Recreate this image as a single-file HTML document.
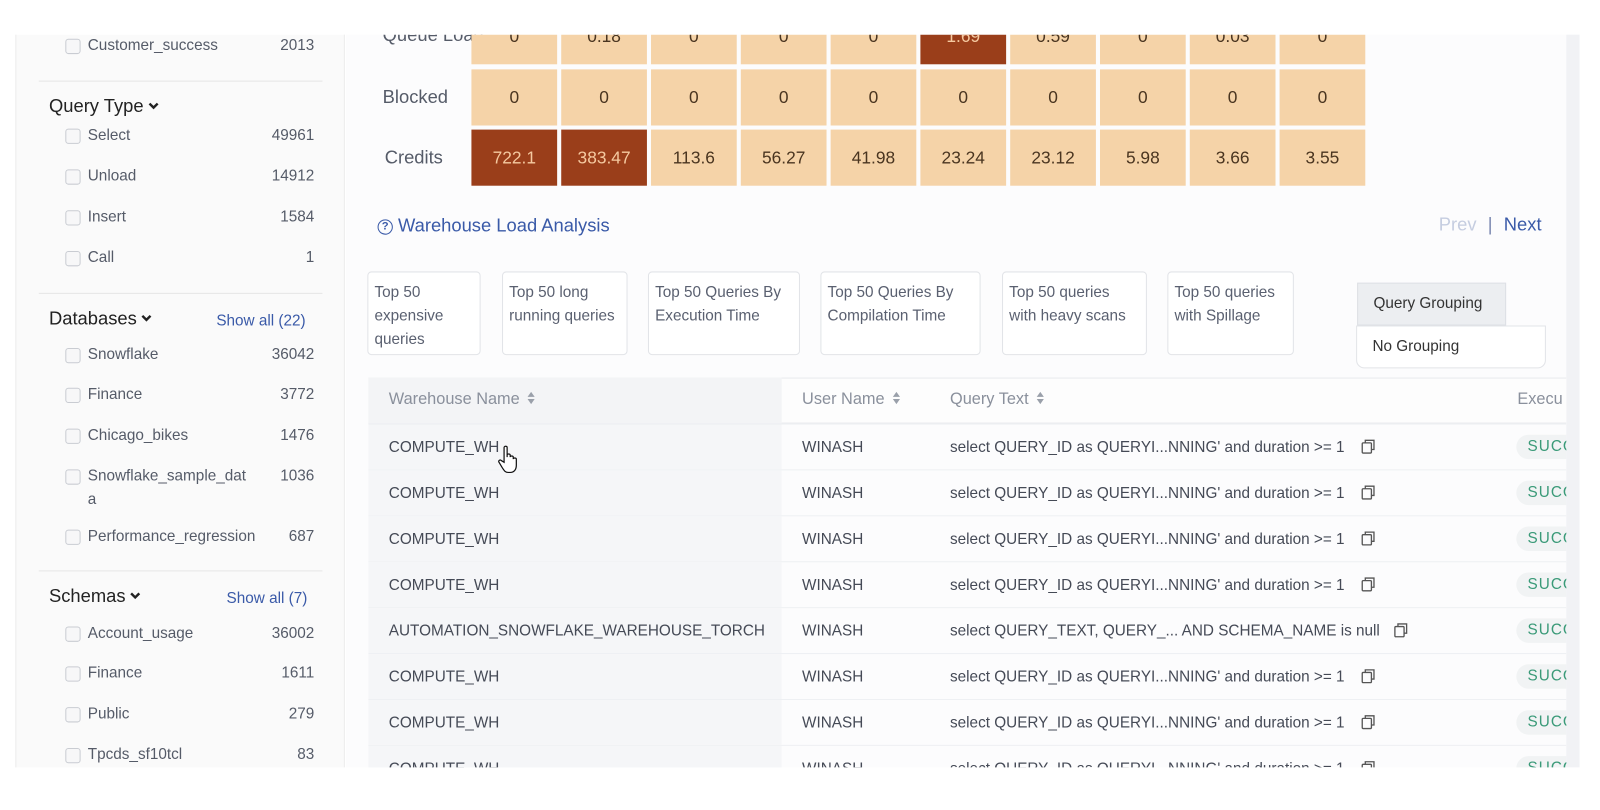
<!DOCTYPE html>
<html><head><meta charset="utf-8"><style>
*{margin:0;padding:0;box-sizing:border-box}
html,body{width:1600px;height:810px;overflow:hidden;background:#fff}
#wrap{position:absolute;left:0;top:0;width:1568px;height:794px;transform:scale(1.0204);transform-origin:0 0;font-family:"Liberation Sans",sans-serif;color:#4a5060}
.a{position:absolute;white-space:nowrap}
#side{position:absolute;left:15px;top:34px;width:323px;height:718px;background:#fafafa;border-left:1px solid #ececec;border-right:1px solid #ececec;overflow:hidden}
#main{position:absolute;left:339px;top:34px;width:1196px;height:718px;background:#fcfcfd;overflow:hidden}
#strip{position:absolute;left:1535px;top:34px;width:13px;height:718px;background:#f1f2f5}
.cb{position:absolute;width:15px;height:15px;border:1px solid #c9ccd2;border-radius:3px;background:#f7f7f8}
.it{font-size:15px;color:#555b68}
.num{font-size:15px;color:#555b68;text-align:right;width:80px}
.hd{font-size:18px;color:#222}
.lnk{font-size:15px;color:#3a5aa8}
.sep{position:absolute;left:22px;width:278px;height:1px;background:#e6e6e6}
.cell{position:absolute;width:84px;height:55px;background:#f5d3a8;text-align:center;line-height:55px;font-size:17px;color:#4a3520}
.dk{background:#9a3e1a;color:#f5c9a0}
.rl{font-size:18px;color:#555b68}
.card{position:absolute;top:266px;height:82px;border:1px solid #e2e4e8;border-radius:4px;background:#fff;padding:8px 6px;font-size:15px;line-height:23px;color:#5a6070;white-space:normal}
.row{position:absolute;left:361px;width:1174px;height:45px;border-bottom:1px solid #eef0f3}
.row .w{position:absolute;left:0;top:0;width:405px;height:44px;background:#f5f6f8}
.t{position:absolute;font-size:15px;color:#454a56;top:14px;white-space:nowrap}
.suc{position:absolute;left:1125px;top:10px;width:60px;height:24px;border-radius:12px;background:#f1f3f4;color:#3a9a78;font-size:15px;line-height:24px;padding-left:11px;letter-spacing:1px}
.cp{position:absolute;top:14px;width:14px;height:15px}
.th{position:absolute;top:13px;font-size:16px;color:#8a909c;white-space:nowrap}
.chev{display:inline-block;vertical-align:2px;margin-left:4px}
.srt{display:inline-block;vertical-align:-1px;margin-left:7px}
</style></head><body><div id="wrap">
<div id="side">
 <div class="cb" style="left:48px;top:4px"></div><div class="a it" style="left:70px;top:2px">Customer_success</div><div class="a num" style="left:212px;top:2px">2013</div>
 <div class="sep" style="top:45px"></div>
 <div class="a hd" style="left:32px;top:60px">Query Type<svg class="chev" width="11" height="8" viewBox="0 0 11 8"><path d="M1.5 1.5l4 4 4-4" fill="none" stroke="#222" stroke-width="2.4"/></svg></div>
 <div class="cb" style="left:48px;top:92px"></div><div class="a it" style="left:70px;top:90px">Select</div><div class="a num" style="left:212px;top:90px">49961</div>
 <div class="cb" style="left:48px;top:132px"></div><div class="a it" style="left:70px;top:130px">Unload</div><div class="a num" style="left:212px;top:130px">14912</div>
 <div class="cb" style="left:48px;top:172px"></div><div class="a it" style="left:70px;top:170px">Insert</div><div class="a num" style="left:212px;top:170px">1584</div>
 <div class="cb" style="left:48px;top:212px"></div><div class="a it" style="left:70px;top:210px">Call</div><div class="a num" style="left:212px;top:210px">1</div>
 <div class="sep" style="top:253px"></div>
 <div class="a hd" style="left:32px;top:268px">Databases<svg class="chev" width="11" height="8" viewBox="0 0 11 8"><path d="M1.5 1.5l4 4 4-4" fill="none" stroke="#222" stroke-width="2.4"/></svg></div>
 <div class="a lnk" style="left:196px;top:272px">Show all (22)</div>
 <div class="cb" style="left:48px;top:307px"></div><div class="a it" style="left:70px;top:305px">Snowflake</div><div class="a num" style="left:212px;top:305px">36042</div>
 <div class="cb" style="left:48px;top:346px"></div><div class="a it" style="left:70px;top:344px">Finance</div><div class="a num" style="left:212px;top:344px">3772</div>
 <div class="cb" style="left:48px;top:386px"></div><div class="a it" style="left:70px;top:384px">Chicago_bikes</div><div class="a num" style="left:212px;top:384px">1476</div>
 <div class="cb" style="left:48px;top:426px"></div><div class="a it" style="left:70px;top:424px">Snowflake_sample_dat</div><div class="a num" style="left:212px;top:424px">1036</div><div class="a it" style="left:70px;top:447px">a</div>
 <div class="cb" style="left:48px;top:485px"></div><div class="a it" style="left:70px;top:483px">Performance_regression</div><div class="a num" style="left:212px;top:483px">687</div>
 <div class="sep" style="top:525px"></div>
 <div class="a hd" style="left:32px;top:540px">Schemas<svg class="chev" width="11" height="8" viewBox="0 0 11 8"><path d="M1.5 1.5l4 4 4-4" fill="none" stroke="#222" stroke-width="2.4"/></svg></div>
 <div class="a lnk" style="left:206px;top:544px">Show all (7)</div>
 <div class="cb" style="left:48px;top:580px"></div><div class="a it" style="left:70px;top:578px">Account_usage</div><div class="a num" style="left:212px;top:578px">36002</div>
 <div class="cb" style="left:48px;top:619px"></div><div class="a it" style="left:70px;top:617px">Finance</div><div class="a num" style="left:212px;top:617px">1611</div>
 <div class="cb" style="left:48px;top:659px"></div><div class="a it" style="left:70px;top:657px">Public</div><div class="a num" style="left:212px;top:657px">279</div>
 <div class="cb" style="left:48px;top:699px"></div><div class="a it" style="left:70px;top:697px">Tpcds_sf10tcl</div><div class="a num" style="left:212px;top:697px">83</div>
</div>
<div id="main"></div>
<div id="strip"></div>
<div style="position:absolute;left:339px;top:34px;width:1196px;height:718px;overflow:hidden">
 <div style="position:absolute;left:-339px;top:-34px;width:1600px;height:810px">
 <div class="a rl" style="left:375px;top:24px">Queue Load</div>
 <div class="a rl" style="left:375px;top:85px">Blocked</div>
 <div class="a rl" style="left:377px;top:144px">Credits</div>
 <div class="cell" style="left:462px;top:8px">0</div><div class="cell" style="left:550px;top:8px">0.18</div><div class="cell" style="left:638px;top:8px">0</div><div class="cell" style="left:726px;top:8px">0</div><div class="cell" style="left:814px;top:8px">0</div><div class="cell dk" style="left:902px;top:8px">1.69</div><div class="cell" style="left:990px;top:8px">0.59</div><div class="cell" style="left:1078px;top:8px">0</div><div class="cell" style="left:1166px;top:8px">0.03</div><div class="cell" style="left:1254px;top:8px">0</div>
 <div class="cell" style="left:462px;top:68px">0</div><div class="cell" style="left:550px;top:68px">0</div><div class="cell" style="left:638px;top:68px">0</div><div class="cell" style="left:726px;top:68px">0</div><div class="cell" style="left:814px;top:68px">0</div><div class="cell" style="left:902px;top:68px">0</div><div class="cell" style="left:990px;top:68px">0</div><div class="cell" style="left:1078px;top:68px">0</div><div class="cell" style="left:1166px;top:68px">0</div><div class="cell" style="left:1254px;top:68px">0</div>
 <div class="cell dk" style="left:462px;top:127px">722.1</div><div class="cell dk" style="left:550px;top:127px">383.47</div><div class="cell" style="left:638px;top:127px">113.6</div><div class="cell" style="left:726px;top:127px">56.27</div><div class="cell" style="left:814px;top:127px">41.98</div><div class="cell" style="left:902px;top:127px">23.24</div><div class="cell" style="left:990px;top:127px">23.12</div><div class="cell" style="left:1078px;top:127px">5.98</div><div class="cell" style="left:1166px;top:127px">3.66</div><div class="cell" style="left:1254px;top:127px">3.55</div>
 <div class="a" style="left:370px;top:211px;font-size:18px;color:#3a5aa8"><span style="display:inline-block;width:15px;height:15px;border:1.5px solid #3a5aa8;border-radius:50%;font-size:11px;text-align:center;line-height:12px;vertical-align:2px;font-weight:bold">?</span> Warehouse Load Analysis</div>
 <div class="a" style="left:1410px;top:210px;font-size:18px;color:#c5cde0">Prev <span style="color:#7a88b0;margin:0 6px">|</span> <span style="color:#3a5aa8">Next</span></div>
 <div class="card" style="left:360px;width:111px">Top 50 expensive queries</div>
 <div class="card" style="left:492px;width:123px">Top 50 long running queries</div>
 <div class="card" style="left:635px;width:149px">Top 50 Queries By Execution Time</div>
 <div class="card" style="left:804px;width:157px">Top 50 Queries By Compilation Time</div>
 <div class="card" style="left:982px;width:142px">Top 50 queries with heavy scans</div>
 <div class="card" style="left:1144px;width:124px">Top 50 queries with Spillage</div>
 <div class="a" style="left:1330px;top:277px;width:146px;height:42px;background:#eceef1;border:1px solid #dde0e5;font-size:15px;line-height:40px;padding-left:15px;color:#333">Query Grouping</div>
 <div class="a" style="left:1329px;top:319px;width:186px;height:42px;background:#fff;border:1px solid #e2e4e8;border-radius:0 0 8px 8px;font-size:15px;line-height:40px;padding-left:15px;color:#333">No Grouping</div>
 <div class="a" style="left:361px;top:370px;width:1174px;height:46px;background:#fdfdfd;border-top:1px solid #e8eaee;border-bottom:2px solid #eceef1"></div>
 <div class="a" style="left:361px;top:370px;width:405px;height:45px;background:#f3f4f6"></div>
 <div class="th" style="left:381px;top:383px">Warehouse Name<svg class="srt" width="9" height="14" viewBox="0 0 9 14"><path d="M4.5 1L8 6H1zM4.5 13L8 8H1z" fill="#9aa0aa"/></svg></div>
 <div class="th" style="left:786px;top:383px">User Name<svg class="srt" width="9" height="14" viewBox="0 0 9 14"><path d="M4.5 1L8 6H1zM4.5 13L8 8H1z" fill="#9aa0aa"/></svg></div>
 <div class="th" style="left:931px;top:383px">Query Text<svg class="srt" width="9" height="14" viewBox="0 0 9 14"><path d="M4.5 1L8 6H1zM4.5 13L8 8H1z" fill="#9aa0aa"/></svg></div>
 <div class="th" style="left:1487px;top:383px">Execu</div>
 </div>
</div>
<div style="position:absolute;left:339px;top:34px;width:1196px;height:718px;overflow:hidden">
<div style="position:absolute;left:-339px;top:-34px">
<div class="row" style="top:416px"><div class="w"></div><div class="t" style="left:20px">COMPUTE_WH</div><div class="t" style="left:425px">WINASH</div><div class="t" style="left:570px">select QUERY_ID as QUERYI...NNING' and duration &gt;= 1</div><svg class="cp" style="left:973px" viewBox="0 0 14 15"><rect x="1" y="4" width="9" height="10" rx="1" fill="none" stroke="#555" stroke-width="1.3"/><path d="M4 4V1.5h8.5v9H10" fill="none" stroke="#555" stroke-width="1.3"/></svg><div class="suc">SUCC</div></div>
<div class="row" style="top:461px"><div class="w"></div><div class="t" style="left:20px">COMPUTE_WH</div><div class="t" style="left:425px">WINASH</div><div class="t" style="left:570px">select QUERY_ID as QUERYI...NNING' and duration &gt;= 1</div><svg class="cp" style="left:973px" viewBox="0 0 14 15"><rect x="1" y="4" width="9" height="10" rx="1" fill="none" stroke="#555" stroke-width="1.3"/><path d="M4 4V1.5h8.5v9H10" fill="none" stroke="#555" stroke-width="1.3"/></svg><div class="suc">SUCC</div></div>
<div class="row" style="top:506px"><div class="w"></div><div class="t" style="left:20px">COMPUTE_WH</div><div class="t" style="left:425px">WINASH</div><div class="t" style="left:570px">select QUERY_ID as QUERYI...NNING' and duration &gt;= 1</div><svg class="cp" style="left:973px" viewBox="0 0 14 15"><rect x="1" y="4" width="9" height="10" rx="1" fill="none" stroke="#555" stroke-width="1.3"/><path d="M4 4V1.5h8.5v9H10" fill="none" stroke="#555" stroke-width="1.3"/></svg><div class="suc">SUCC</div></div>
<div class="row" style="top:551px"><div class="w"></div><div class="t" style="left:20px">COMPUTE_WH</div><div class="t" style="left:425px">WINASH</div><div class="t" style="left:570px">select QUERY_ID as QUERYI...NNING' and duration &gt;= 1</div><svg class="cp" style="left:973px" viewBox="0 0 14 15"><rect x="1" y="4" width="9" height="10" rx="1" fill="none" stroke="#555" stroke-width="1.3"/><path d="M4 4V1.5h8.5v9H10" fill="none" stroke="#555" stroke-width="1.3"/></svg><div class="suc">SUCC</div></div>
<div class="row" style="top:596px"><div class="w"></div><div class="t" style="left:20px">AUTOMATION_SNOWFLAKE_WAREHOUSE_TORCH</div><div class="t" style="left:425px">WINASH</div><div class="t" style="left:570px">select QUERY_TEXT, QUERY_... AND SCHEMA_NAME is null</div><svg class="cp" style="left:1005px" viewBox="0 0 14 15"><rect x="1" y="4" width="9" height="10" rx="1" fill="none" stroke="#555" stroke-width="1.3"/><path d="M4 4V1.5h8.5v9H10" fill="none" stroke="#555" stroke-width="1.3"/></svg><div class="suc">SUCC</div></div>
<div class="row" style="top:641px"><div class="w"></div><div class="t" style="left:20px">COMPUTE_WH</div><div class="t" style="left:425px">WINASH</div><div class="t" style="left:570px">select QUERY_ID as QUERYI...NNING' and duration &gt;= 1</div><svg class="cp" style="left:973px" viewBox="0 0 14 15"><rect x="1" y="4" width="9" height="10" rx="1" fill="none" stroke="#555" stroke-width="1.3"/><path d="M4 4V1.5h8.5v9H10" fill="none" stroke="#555" stroke-width="1.3"/></svg><div class="suc">SUCC</div></div>
<div class="row" style="top:686px"><div class="w"></div><div class="t" style="left:20px">COMPUTE_WH</div><div class="t" style="left:425px">WINASH</div><div class="t" style="left:570px">select QUERY_ID as QUERYI...NNING' and duration &gt;= 1</div><svg class="cp" style="left:973px" viewBox="0 0 14 15"><rect x="1" y="4" width="9" height="10" rx="1" fill="none" stroke="#555" stroke-width="1.3"/><path d="M4 4V1.5h8.5v9H10" fill="none" stroke="#555" stroke-width="1.3"/></svg><div class="suc">SUCC</div></div>
<div class="row" style="top:731px"><div class="w"></div><div class="t" style="left:20px">COMPUTE_WH</div><div class="t" style="left:425px">WINASH</div><div class="t" style="left:570px">select QUERY_ID as QUERYI...NNING' and duration &gt;= 1</div><svg class="cp" style="left:973px" viewBox="0 0 14 15"><rect x="1" y="4" width="9" height="10" rx="1" fill="none" stroke="#555" stroke-width="1.3"/><path d="M4 4V1.5h8.5v9H10" fill="none" stroke="#555" stroke-width="1.3"/></svg><div class="suc">SUCC</div></div>
<svg style="position:absolute;left:488px;top:436px" width="22" height="30" viewBox="0 0 22 30"><path d="M6 2.5c0-1.5 3-1.5 3 0V12l0-2c0-1.5 3-1.5 3 0v2c0-1.5 3-1.5 3 0v2c0-1.5 3-1.5 3 0v6c0 4-2 7-6 7h-2c-3 0-4-2-6-5l-3-5c-1-1.5 1-3 2.5-1.5L6 17z" fill="#fff" stroke="#111" stroke-width="1.2"/></svg>
</div></div>
</div></body></html>
